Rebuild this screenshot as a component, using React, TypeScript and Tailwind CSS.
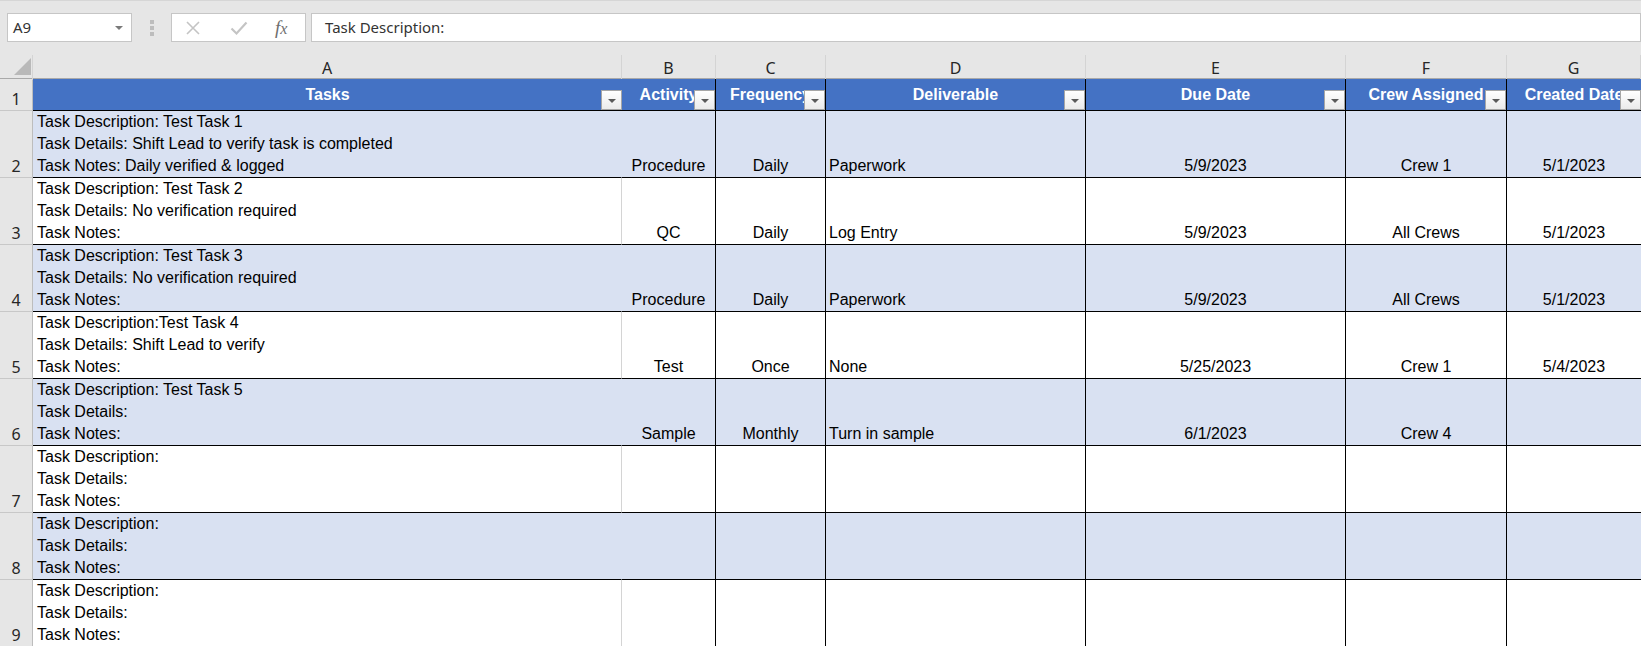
import React from 'react';

const COLS = 'grid grid-cols-[33px_589px_94px_110px_260px_260px_161px_134px]';

const rows = [
  {
    a: ['Task Description: Test Task 1', 'Task Details: Shift Lead to verify task is completed', 'Task Notes: Daily verified & logged'],
    b: 'Procedure', c: 'Daily', d: 'Paperwork', e: '5/9/2023', f: 'Crew 1', g: '5/1/2023',
  },
  {
    a: ['Task Description: Test Task 2', 'Task Details: No verification required', 'Task Notes:'],
    b: 'QC', c: 'Daily', d: 'Log Entry', e: '5/9/2023', f: 'All Crews', g: '5/1/2023',
  },
  {
    a: ['Task Description: Test Task 3', 'Task Details: No verification required', 'Task Notes:'],
    b: 'Procedure', c: 'Daily', d: 'Paperwork', e: '5/9/2023', f: 'All Crews', g: '5/1/2023',
  },
  {
    a: ['Task Description:Test Task 4', 'Task Details: Shift Lead to verify', 'Task Notes:'],
    b: 'Test', c: 'Once', d: 'None', e: '5/25/2023', f: 'Crew 1', g: '5/4/2023',
  },
  {
    a: ['Task Description: Test Task 5', 'Task Details:', 'Task Notes:'],
    b: 'Sample', c: 'Monthly', d: 'Turn in sample', e: '6/1/2023', f: 'Crew 4', g: '',
  },
  { a: ['Task Description:', 'Task Details:', 'Task Notes:'], b: '', c: '', d: '', e: '', f: '', g: '' },
  { a: ['Task Description:', 'Task Details:', 'Task Notes:'], b: '', c: '', d: '', e: '', f: '', g: '' },
  { a: ['Task Description:', 'Task Details:', 'Task Notes:'], b: '', c: '', d: '', e: '', f: '', g: '' },
];

function FilterButton() {
  return (
    <span className="absolute right-0 bottom-0 z-10 w-[21px] h-[20px] border border-[#a6a6a6] bg-linear-to-b from-white to-[#ebebeb] flex items-center justify-center">
      <span className="mt-[2px] w-0 h-0 border-l-[4px] border-r-[4px] border-t-[4px] border-l-transparent border-r-transparent border-t-[#5a5a5a]" />
    </span>
  );
}

function HeaderCell({ label, border }: { label: string; border: boolean }) {
  return (
    <div
      className={`relative h-[32px] bg-[#4472c4] border-b border-black text-white font-bold text-[16px] flex items-center justify-center overflow-hidden whitespace-nowrap ${
        border ? 'border-r border-r-black' : ''
      }`}
    >
      <span className="pt-[1px]">{label}</span>
      <FilterButton />
    </div>
  );
}

export default function App() {
  const letters = ['A', 'B', 'C', 'D', 'E', 'F', 'G'];
  const headers = ['Tasks', 'Activity', 'Frequency', 'Deliverable', 'Due Date', 'Crew Assigned', 'Created Date'];

  return (
    <div className="w-[1641px] h-[646px] overflow-hidden bg-white text-black font-['Liberation_Sans',Arial,sans-serif]">
      {/* formula bar */}
      <div className="h-[55px] bg-[#e6e6e6] border-t border-[#d6d6d6] flex items-start pt-[12px] pl-[7px] font-['Noto_Sans','Open_Sans',sans-serif]">
        <div className="w-[125px] h-[29px] bg-white border border-[#c6c6c6] flex items-center pl-[5px]">
          <span className="text-[15px] text-[#333]">A9</span>
          <span className="ml-auto mr-[8px] w-0 h-0 border-l-[4px] border-r-[4px] border-t-[4px] border-l-transparent border-r-transparent border-t-[#7a7a7a]" />
        </div>
        <div className="ml-[18px] h-[29px] flex flex-col justify-center gap-[2px]">
          <span className="w-[4px] h-[4px] bg-[#bdbdbd]" />
          <span className="w-[4px] h-[4px] bg-[#bdbdbd]" />
          <span className="w-[4px] h-[4px] bg-[#bdbdbd]" />
        </div>
        <div className="ml-[17px] w-[135px] h-[29px] bg-white border border-[#c6c6c6] flex items-center">
          <svg width="16" height="16" viewBox="0 0 16 16" className="ml-[13px]">
            <path d="M2 2 L14 14 M14 2 L2 14" stroke="#c4c4c4" strokeWidth="1.6" fill="none" />
          </svg>
          <svg width="18" height="16" viewBox="0 0 18 16" className="ml-[29px]">
            <path d="M1.5 8.5 L6.5 13.5 L16.5 2.5" stroke="#c4c4c4" strokeWidth="2.2" fill="none" />
          </svg>
          <span className="ml-[27px] text-[19px] italic text-[#6e6e6e] font-['Liberation_Serif',serif] leading-none">
            f<span className="text-[16px]">x</span>
          </span>
        </div>
        <div className="ml-[5px] flex-1 h-[29px] bg-white border border-[#c6c6c6] flex items-center pl-[13px]">
          <span className="text-[15px] text-[#333]">Task Description:</span>
        </div>
      </div>

      {/* column letters */}
      <div className={`${COLS} h-[24px] bg-[#e6e6e6] border-b border-[#a9a9a9]`}>
        <div className="relative border-r border-[#d4d4d4]">
          <svg width="17" height="17" viewBox="0 0 17 17" className="absolute left-[14px] top-[3px]">
            <polygon points="17,0 17,17 0,17" fill="#b9b9b9" />
          </svg>
        </div>
        {letters.map((l) => (
          <div
            key={l}
            className="flex items-center justify-center border-r border-[#d4d4d4] text-[16px] text-[#262626] font-['Noto_Sans','Open_Sans',sans-serif] pt-[1px]"
          >
            {l}
          </div>
        ))}
      </div>

      {/* table header row */}
      <div className={COLS}>
        <div className="h-[32px] bg-[#e6e6e6] border-r border-[#bdbdbd] border-b border-b-[#c8c8c8] flex items-end justify-center text-[16px] text-[#262626] leading-[22px] font-['Noto_Sans','Open_Sans',sans-serif]">
          1
        </div>
        {headers.map((h, i) => (
          <HeaderCell key={h} label={h} border={i > 0 && i < 6} />
        ))}
      </div>

      {/* data rows */}
      {rows.map((r, i) => {
        const band = i % 2 === 0;
        const bg = band ? 'bg-[#d9e1f2]' : 'bg-white';
        const cell = `h-[67px] ${bg} border-b border-black flex items-end text-[16px] leading-[22px] whitespace-nowrap overflow-hidden`;
        return (
          <div key={i} className={COLS}>
            <div className="h-[67px] bg-[#e6e6e6] border-r border-[#bdbdbd] border-b border-b-[#c8c8c8] flex items-end justify-center text-[16px] text-[#262626] leading-[22px] font-['Noto_Sans','Open_Sans',sans-serif]">
              {i + 2}
            </div>
            <div className={`${cell} flex-col items-start justify-end pl-[4px] border-r ${band ? 'border-r-[#d9e1f2]' : 'border-r-[#d4d4d4]'}`}>
              {r.a.map((line, j) => (
                <div key={j}>{line}</div>
              ))}
            </div>
            <div className={`${cell} justify-center border-r border-r-black`}>{r.b}</div>
            <div className={`${cell} justify-center border-r border-r-black`}>{r.c}</div>
            <div className={`${cell} justify-start pl-[3px] border-r border-r-black`}>{r.d}</div>
            <div className={`${cell} justify-center border-r border-r-black`}>{r.e}</div>
            <div className={`${cell} justify-center border-r border-r-black`}>{r.f}</div>
            <div className={`${cell} justify-center`}>{r.g}</div>
          </div>
        );
      })}
    </div>
  );
}
